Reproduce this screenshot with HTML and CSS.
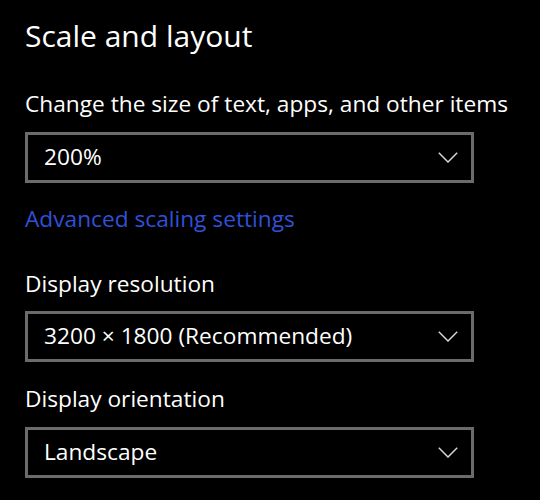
FILE: index.html
```html
<!DOCTYPE html>
<html lang="en">
<head>
<meta charset="utf-8">
<title>Scale and layout</title>
<link rel="stylesheet" href="styles.css">
</head>
<body>
<main class="panel">
  <h1 class="title">Scale and layout</h1>
  <div class="label label-first">Change the size of text, apps, and other items</div>
  <div class="select select-first">
    <span class="select-value">200%</span>
    <svg class="chevron" viewBox="0 0 20 11" width="20" height="11" aria-hidden="true"><polyline points="0.8,0.8 10,10 19.2,0.8" fill="none" stroke="#d4d4d4" stroke-width="1.5"/></svg>
  </div>
  <a class="link" href="#">Advanced scaling settings</a>
  <div class="label label-res">Display resolution</div>
  <div class="select select-res">
    <span class="select-value">3200 × 1800 (Recommended)</span>
    <svg class="chevron" viewBox="0 0 20 11" width="20" height="11" aria-hidden="true"><polyline points="0.8,0.8 10,10 19.2,0.8" fill="none" stroke="#d4d4d4" stroke-width="1.5"/></svg>
  </div>
  <div class="label label-orient">Display orientation</div>
  <div class="select select-orient">
    <span class="select-value">Landscape</span>
    <svg class="chevron" viewBox="0 0 20 11" width="20" height="11" aria-hidden="true"><polyline points="0.8,0.8 10,10 19.2,0.8" fill="none" stroke="#d4d4d4" stroke-width="1.5"/></svg>
  </div>
</main>
</body>
</html>
```

FILE: styles.css
```css
html, body {
  margin: 0;
  padding: 0;
  background: #000;
}

body {
  width: 540px;
  height: 500px;
  overflow: hidden;
  color: #fff;
  font-family: "Open Sans", "Noto Sans", sans-serif;
}

.panel {
  display: flex;
  flex-direction: column;
  align-items: flex-start;
  padding: 15.5px 0 0 25px;
}

.title {
  margin: 0;
  font-size: 30px;
  font-weight: 400;
  line-height: 40px;
}

.label {
  font-size: 22.7px;
  line-height: 30px;
}

.label-first {
  margin-top: 33.8px;
}

.label-res {
  margin-top: 35px;
}

.label-orient {
  margin-top: 22.5px;
}

.select {
  box-sizing: border-box;
  width: 449px;
  height: 51px;
  border: 3px solid #6b6b6b;
  display: flex;
  align-items: center;
  justify-content: space-between;
  padding: 0 13px 0 16px;
  font-size: 22.7px;
}

.select-value {
  line-height: 43px;
  padding-bottom: 2px;
}

.select-first {
  margin-top: 12.5px;
}

.select-res {
  margin-top: 11.5px;
}

.select-orient {
  margin-top: 12.5px;
}

.chevron {
  display: block;
}

.link {
  margin-top: 21.5px;
  font-size: 22.7px;
  line-height: 30px;
  color: #2f50d8;
  text-decoration: none;
}
```
